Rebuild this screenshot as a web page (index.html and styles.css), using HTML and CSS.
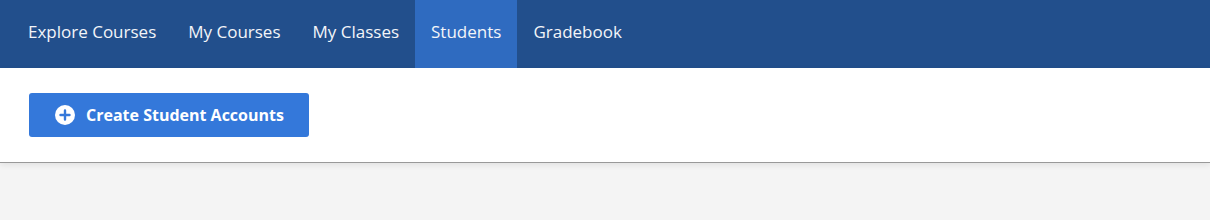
FILE: index.html
```html
<!DOCTYPE html>
<html lang="en">
<head>
    <meta charset="UTF-8">
    <title>Students</title>
    <link rel="stylesheet" href="styles.css">
</head>
<body>
    <nav class="topnav">
        <a href="#" class="nav-item">Explore Courses</a>
        <a href="#" class="nav-item">My Courses</a>
        <a href="#" class="nav-item">My Classes</a>
        <a href="#" class="nav-item active">Students</a>
        <a href="#" class="nav-item">Gradebook</a>
    </nav>
    <div class="toolbar">
        <button class="create-btn">
            <svg class="plus-icon" width="20" height="20" viewBox="0 0 20 20">
                <circle cx="10" cy="10" r="10" fill="#fff"/>
                <path d="M10 5.5v9M5.5 10h9" stroke="#3478da" stroke-width="2.4" stroke-linecap="round"/>
            </svg>
            Create Student Accounts
        </button>
    </div>
    <main class="content"></main>
</body>
</html>
```

FILE: styles.css
```css
body {
    margin: 0;
    font-family: "Open Sans", Lato, sans-serif;
    background-color: #f4f4f4;
}
.topnav {
    display: flex;
    height: 68px;
    padding: 0 12px;
    background-color: #224f8c;
}
.nav-item {
    display: flex;
    align-items: center;
    padding: 0 16px 5px;
    color: #f3f5f9;
    font-size: 17px;
    text-decoration: none;
}
.nav-item.active {
    background-color: #2f6bc0;
}
.toolbar {
    background-color: #fff;
    padding: 25px 29px 25px;
    border-bottom: 1px solid #999;
    box-shadow: 0 2px 6px rgba(0, 0, 0, 0.08);
}
.create-btn {
    display: flex;
    align-items: center;
    gap: 11px;
    height: 44px;
    padding: 0 25px 0 26px;
    background-color: #3478da;
    color: #fff;
    border: none;
    border-radius: 3px;
    font-family: inherit;
    font-size: 16px;
    font-weight: bold;
    white-space: nowrap;
    cursor: pointer;
}
.content {
    min-height: 60px;
}
```
